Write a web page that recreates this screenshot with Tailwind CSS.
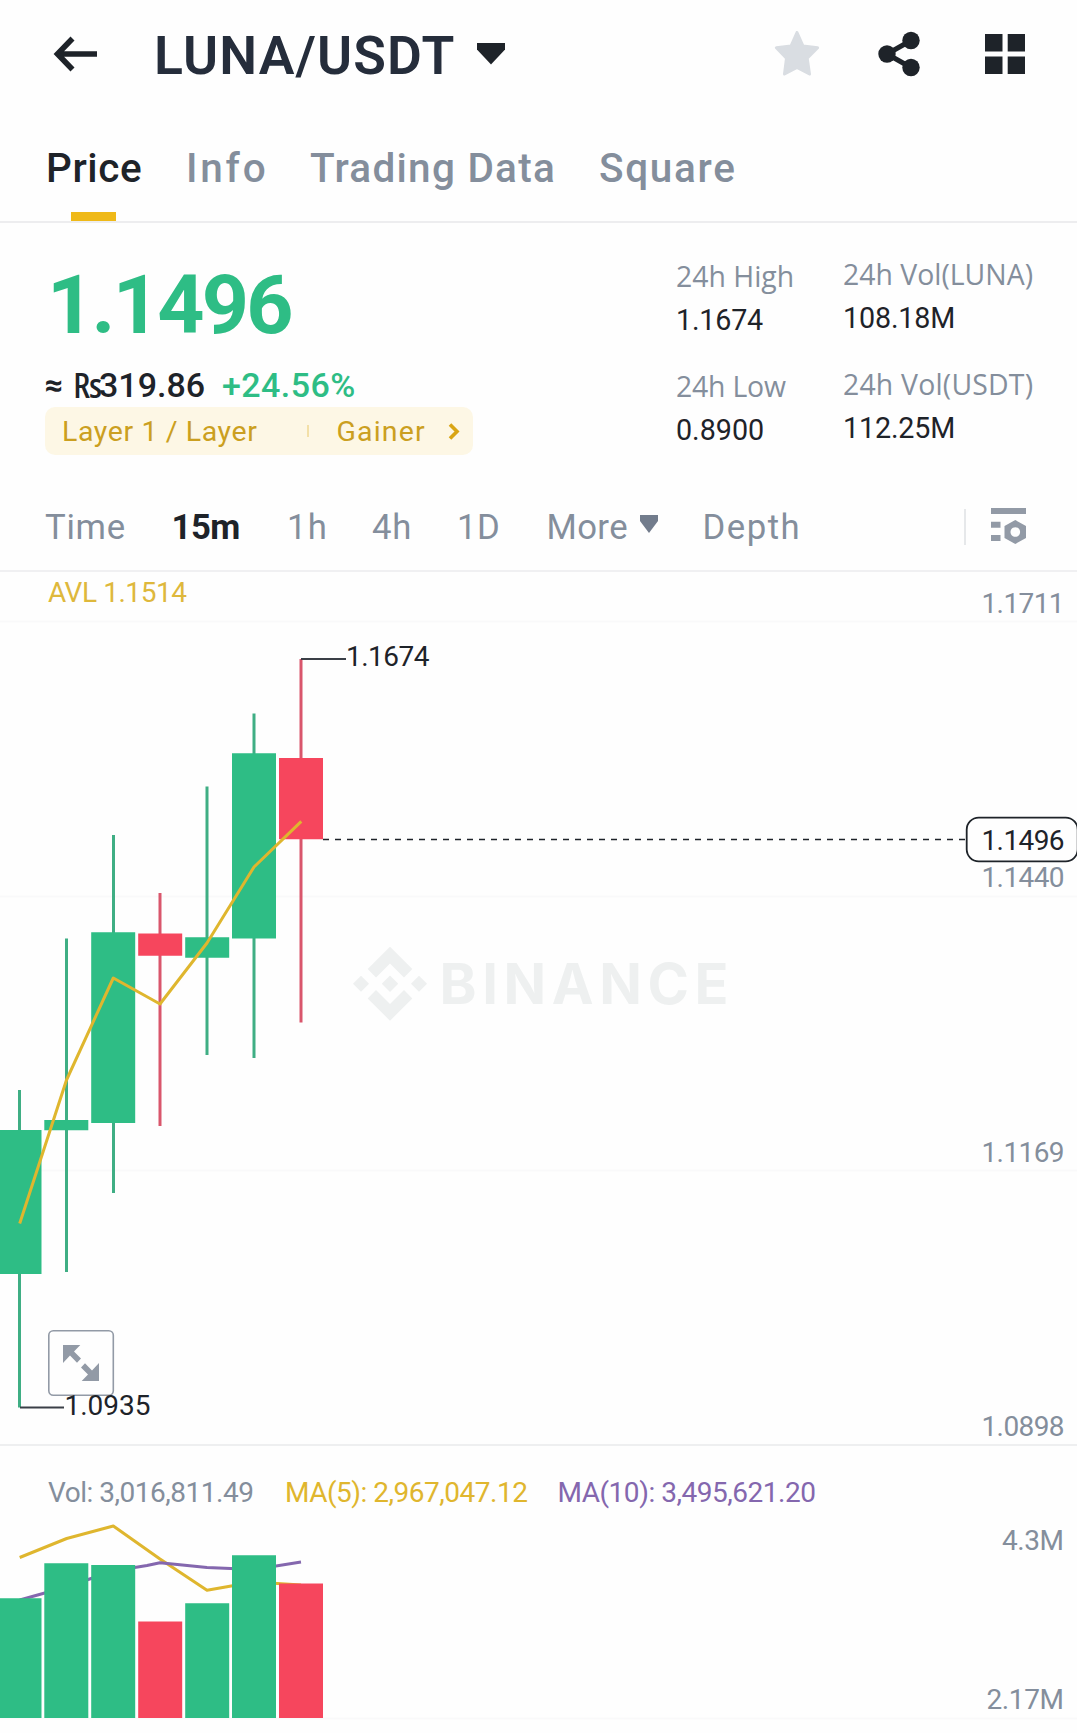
<!DOCTYPE html>
<html lang="en">

<head>
  <meta charset="UTF-8">
  <meta name="viewport" content="width=device-width, initial-scale=1.0">
  <title>LUNA/USDT</title>
  <script src="https://cdn.jsdelivr.net/npm/@tailwindcss/browser@4"></script>
</head>

<body class="bg-[#fefefe] font-['Roboto',sans-serif] text-[#1e2329]">
  <div class="w-[1077px] h-[1733px] overflow-hidden flex flex-col whitespace-nowrap">

    <!-- header -->
    <header class="h-[108px] shrink-0 flex items-center pl-[53px] pr-[52px]">
      <svg class="w-11 h-9" viewBox="0 0 44 36" fill="none" stroke="#1e2329" stroke-width="5.6">
        <path d="M44 18H5M19.5 2.5L4.5 18l15 15.500" />
      </svg>
      <h1 class="ml-[57px] pt-[3px] text-[53.500px] leading-[54px] font-semibold tracking-[1.12px] text-[#252d3b]">LUNA/USDT</h1>
      <svg class="ml-[21px] w-7 h-[22px]" viewBox="0 0 28 22" fill="#1e2329">
        <path d="M0 0h28v6.500L14 21.500 0 6.500z" />
      </svg>
      <svg class="ml-auto w-[46px] h-[46px]" viewBox="0 0 46 46" fill="#d9dde2" stroke="#d9dde2" stroke-width="3" stroke-linejoin="round">
        <path d="M23 1.500l6 13.500 14.600 1.800-10.400 10.400 2.300 15.800L23 36.500 10.500 43l2-15.800L2.400 16.800 17 15z" />
      </svg>
      <svg class="ml-[58px] w-[42px] h-[46px]" viewBox="0 0 42 46" fill="#1e2329">
        <path d="M33 9.500L9 23l24 13.500" fill="none" stroke="#1e2329" stroke-width="5" />
        <circle cx="9" cy="23" r="8.700" />
        <circle cx="33" cy="9.500" r="8.700" />
        <circle cx="33" cy="36.500" r="8.700" />
      </svg>
      <svg class="ml-[65px] w-10 h-10" viewBox="0 0 40 40" fill="#1e2329">
        <path d="M0 0h17.500v17.500H0zM22.700 0H40v17.500H22.700zM0 22.500h17.500V40H0zM22.700 22.500H40V40H22.700z" />
      </svg>
    </header>

    <!-- tabs -->
    <nav class="h-[115px] shrink-0 border-b-2 border-[#ededef] pl-[46px] grid grid-cols-[140px_124px_289px_auto] font-medium text-[40.500px] leading-10 text-[#848e9c]">
      <div class="pt-[40px] flex flex-col text-[#1e2329]">
        <span class="tracking-[0.600px]">Price</span>
        <span class="mt-auto ml-[25px] w-[45px] h-[9px] bg-[#efb918]"></span>
      </div>
      <span class="pt-[40px] tracking-[2.800px]">Info</span>
      <span class="pt-[40px] tracking-[1.250px]">Trading Data</span>
      <span class="pt-[40px] tracking-[1.700px]">Square</span>
    </nav>

    <!-- price summary -->
    <section class="h-[261px] shrink-0 flex">
      <div class="w-[676px] pl-[45px] pt-10 flex flex-col items-start">
        <div class="pl-[2px] text-[82.400px] leading-[84px] font-bold tracking-[-2.760px] text-[#2ebd85]">1.1496</div>
        <div class="mt-5 flex text-[34px] leading-9 font-medium">
          <span class="w-[28px] font-['Open_Sans',sans-serif] font-bold text-[31px]">≈</span>
          <span class="w-[26px] font-['Noto_Sans',sans-serif] text-[34px]">₨</span>
          <span class="w-[123px]">319.86</span>
          <span class="tracking-[0.420px] text-[#2ebd85]">+24.56%</span>
        </div>
        <div class="mt-1 w-[428px] h-12 rounded-[10px] bg-[#fdf7e5] flex items-center pl-[17px] pr-[13px] text-[28.500px] leading-7 text-[#cb9f20]">
          <span class="pt-px tracking-[0.600px]">Layer 1 / Layer</span>
          <span class="ml-[50px] w-0.5 h-3 bg-[#f3e0a8]"></span>
          <span class="pt-px ml-[27px] tracking-[1.200px]">Gainer</span>
          <svg class="ml-auto w-3 h-[17px]" viewBox="0 0 12 17" fill="none" stroke="#d9a514" stroke-width="3.600">
            <path d="M2 1.500l7 7-7 7" />
          </svg>
        </div>
      </div>
      <dl class="w-[167px] pt-[39px] text-[28.700px] leading-7">
        <dt class="font-['Open_Sans',sans-serif] text-[28.400px] text-[#848e9c]">24h High</dt>
        <dd class="mt-4 tracking-[-0.200px]">1.1674</dd>
        <dt class="mt-[38px] font-['Open_Sans',sans-serif] text-[28.400px] tracking-[-0.200px] text-[#848e9c]">24h Low</dt>
        <dd class="mt-4">0.8900</dd>
      </dl>
      <dl class="pt-[37px] text-[28.700px] leading-7">
        <dt class="font-['Open_Sans',sans-serif] text-[28.400px] text-[#848e9c]">24h Vol(LUNA)</dt>
        <dd class="mt-4 tracking-[-0.150px]">108.18M</dd>
        <dt class="mt-[38px] font-['Open_Sans',sans-serif] text-[28.400px] tracking-[0.200px] text-[#848e9c]">24h Vol(USDT)</dt>
        <dd class="mt-4 tracking-[-0.150px]">112.25M</dd>
      </dl>
    </section>

    <!-- intervals -->
    <nav class="h-[88px] shrink-0 border-b-2 border-[#f0f0f2] pl-[45px] pr-[50px] flex items-center text-[34.700px] leading-9 text-[#848e9c]">
      <span class="w-[126.500px] tracking-[0.740px]">Time</span>
      <span class="w-[115.500px] font-bold tracking-[-0.500px] text-[#1e2329]">15m</span>
      <span class="w-[85px] tracking-[1.250px]">1h</span>
      <span class="w-[85px] tracking-[0.670px]">4h</span>
      <span class="w-[89.500px] tracking-[0.430px]">1D</span>
      <span class="w-[156px] flex">
        <span class="w-[93px] tracking-[0.400px]">More</span>
        <svg class="mt-[6px] w-[18px] h-[18px]" viewBox="0 0 18 18" fill="#727c8c">
          <path d="M0 0h18v6L9 18 0 6z" />
        </svg>
      </span>
      <span class="tracking-[1.500px]">Depth</span>
      <span class="ml-auto w-0.5 h-9 bg-[#e6e8ea]"></span>
      <svg class="ml-[25px] mb-[3px] w-9 h-9" viewBox="0 0 36 36" fill="#929aa6">
        <path d="M0 0h35v6H0zM0 13.700h9.500v6H0zM0 27h9.500v6H0z" />
        <path fill-rule="evenodd" d="M24.300 12l10.700 6v12l-10.700 6-10.800-6V18zM24.300 19.200a4.800 4.800 0 1 0 .01 0z" />
      </svg>
    </nav>

    <!-- chart -->
    <svg class="w-[1077px] h-[1161px] shrink-0 text-[28px]" viewBox="0 572 1077 1161" fill="none">
      <!-- grid -->
      <g stroke="#f9f9fa" stroke-width="2">
        <path d="M0 621.500H1077M0 896.500H1077M0 1170.500H1077M0 1718.500H1077" />
        <path d="M0 1445H1077" stroke="#eeeff0" />
      </g>

      <!-- watermark -->
      <g fill="#eef0f0">
        <path d="M390 946.700l22.300 22.300-8.300 8.400-14-14-14 14-8.300-8.400zM390 1020.700l22.300-22.300-8.300-8.400-14 14-14-14-8.300 8.400zM390 975.500l8.200 8.200-8.200 8.200-8.200-8.200zM361 975.700l8 8-8 8-8-8zM419 975.700l8 8-8 8-8-8z" />
        <text x="439.500" y="1004" class="font-['Inter'] font-bold text-[56px]" textLength="289">BINANCE</text>
      </g>

      <!-- candles -->
      <g stroke="#3fae84" stroke-width="3">
        <path d="M19.500 1090V1407.500M66.500 938.500V1272M113.500 835V1193M207 786.500V1055M254 713.500V1058" />
        <path d="M160 893V1126M301 659V1022.500" stroke="#d9566c" />
      </g>
      <path fill="#2ebd85" d="M0 1130H41.500V1274H0zM44.300 1120H88.300V1130.300H44.300zM91.200 932.300H135.200V1123H91.200zM185.200 937.300H229.200V957.700H185.200zM232 753.200H276V938.500H232z" />
      <path fill="#f6465d" d="M138.200 933.500H182.200V955.700H138.200zM279 758H323V839.300H279z" />
      <path d="M19.700 1223.500L66.500 1080 113.300 978 160 1004 207 943 254 867 301.300 821.300" stroke="#dfb62e" stroke-width="3" stroke-linejoin="round" />

      <!-- last price -->
      <path d="M323 839.500H966" stroke="#1e2329" stroke-width="1.600" stroke-dasharray="6 6" />
      <rect x="966.700" y="817.700" width="111" height="43.600" rx="12" fill="#fefefe" stroke="#1e2329" stroke-width="1.800" />

      <!-- fullscreen button -->
      <rect x="48.800" y="1330.800" width="64.500" height="64.500" rx="4.500" fill="#fefefe" stroke="#929aa6" stroke-width="1.600" />
      <path fill="#929aa6" d="M63 1345h17.300l-6.300 6.500 7 7-4 4.200-7-7.200-7 7.500zM99 1381H81.700l6.300-6.500-7-7 4-4.200 7 7.200 7-7.500z" />

      <path d="M301 659H346M20 1407.500H64" stroke="#3a3f47" stroke-width="1.800" />

      <!-- labels -->
      <g fill="#1e2329">
        <text x="346" y="666" textLength="83.500">1.1674</text>
        <text x="64.500" y="1415">1.0935</text>
        <text x="981.500" y="850" textLength="83">1.1496</text>
      </g>
      <g fill="#848e9c">
        <text x="981.500" y="613" textLength="83">1.1711</text>
        <text x="981.500" y="887" textLength="83">1.1440</text>
        <text x="981.500" y="1162" textLength="83">1.1169</text>
        <text x="981.500" y="1436" textLength="83">1.0898</text>
        <text x="1002" y="1550" textLength="62">4.3M</text>
        <text x="986.500" y="1709" textLength="77.500">2.17M</text>
      </g>
      <text x="48" y="602" fill="#deb83c" textLength="139">AVL 1.1514</text>
      <text x="48" y="1502.300" fill="#848e9c" textLength="206">Vol: 3,016,811.49</text>
      <text x="285" y="1502.300" fill="#e0b62e" textLength="243">MA(5): 2,967,047.12</text>
      <text x="557.500" y="1502.300" fill="#8467ae" textLength="258.500">MA(10): 3,495,621.20</text>

      <!-- volume -->
      <g stroke-width="3" stroke-linejoin="round">
        <path d="M19.700 1557.500L66.700 1538.500 113.300 1526 160 1559 207 1590.300 254 1582 301 1585" stroke="#dfb62e" />
        <path d="M19.700 1600L66.300 1587 113 1571 147 1565.500 160 1562.800 207 1567.500 254 1569.500 301 1562" stroke="#8467ae" />
      </g>
      <path fill="#2ebd85" d="M0 1598.300H41.500V1718H0zM44.300 1563.300H88.300V1718H44.300zM91.200 1565H135.200V1718H91.200zM185.200 1603.300H229.200V1718H185.200zM232 1555.300H276V1718H232z" />
      <path fill="#f6465d" d="M138.200 1621.500H182.200V1718H138.200zM279 1583.500H323V1718H279z" />
    </svg>

  </div>
</body>

</html>
